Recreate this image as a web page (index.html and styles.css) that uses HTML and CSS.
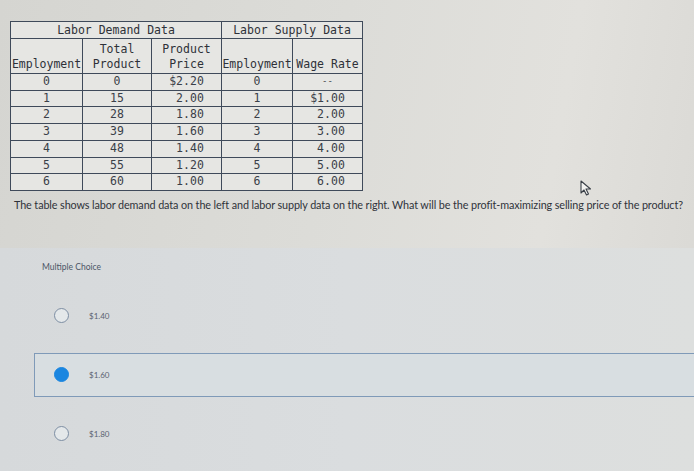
FILE: index.html
```html
<!DOCTYPE html>
<html>
<head>
<meta charset="utf-8">
<link rel="stylesheet" href="styles.css">
</head>
<body>
<div class="page">
  <div class="table-wrap">
    <table class="data">
      <tr class="title-row">
        <th colspan="3">Labor Demand Data</th>
        <th colspan="2">Labor Supply Data</th>
      </tr>
      <tr class="head-row">
        <th class="c1">Employment</th>
        <th class="c2">Total<br>Product</th>
        <th class="c3">Product<br>Price</th>
        <th class="c4">Employment</th>
        <th class="c5">Wage Rate</th>
      </tr>
      <tr><td>0</td><td>0</td><td>$2.20</td><td>0</td><td class="dash">--</td></tr>
      <tr><td>1</td><td>15</td><td>&nbsp;2.00</td><td>1</td><td>$1.00</td></tr>
      <tr><td>2</td><td>28</td><td>&nbsp;1.80</td><td>2</td><td>&nbsp;2.00</td></tr>
      <tr><td>3</td><td>39</td><td>&nbsp;1.60</td><td>3</td><td>&nbsp;3.00</td></tr>
      <tr><td>4</td><td>48</td><td>&nbsp;1.40</td><td>4</td><td>&nbsp;4.00</td></tr>
      <tr><td>5</td><td>55</td><td>&nbsp;1.20</td><td>5</td><td>&nbsp;5.00</td></tr>
      <tr><td>6</td><td>60</td><td>&nbsp;1.00</td><td>6</td><td>&nbsp;6.00</td></tr>
    </table>
  </div>
  <p class="question">The table shows labor demand data on the left and labor supply data on the right. What will be the profit-maximizing selling price of the product?</p>
  <div class="panel">
    <div class="mc-label">Multiple Choice</div>
    <div class="options">
      <div class="option"><span class="radio"></span><span class="opt-text">$1.40</span></div>
      <div class="option selected"><span class="radio"></span><span class="opt-text">$1.60</span></div>
      <div class="option"><span class="radio"></span><span class="opt-text">$1.80</span></div>
    </div>
  </div>
  <svg class="cursor" width="12" height="16" viewBox="0 0 12 16">
    <path d="M1 1 L1 13 L4 10 L6.5 15 L8.5 14 L6 9 L10.5 9 Z" fill="#f2f2f0" stroke="#3a4048" stroke-width="1.1" stroke-linejoin="round"/>
  </svg>
</div>
</body>
</html>
```

FILE: styles.css
```css
html, body {
  margin: 0;
  padding: 0;
}
body {
  width: 694px;
  height: 471px;
  overflow: hidden;
  background: linear-gradient(100deg, #d5d5d1 0%, #dcdcd8 45%, #e2e1dd 75%, #d9d8d4 100%);
  font-family: "Lato", "Open Sans", sans-serif;
}
.page {
  position: relative;
  height: 471px;
}
.table-wrap {
  padding: 21px 0 0 10px;
}
.data {
  border-collapse: collapse;
  font-family: "DejaVu Sans Mono", monospace;
  font-size: 11.5px;
  color: #2e3138;
  background: #e6e6e3;
  border: 1.5px solid #3b4556;
}
.data th, .data td {
  border: 1.2px solid #3f4a5a;
  padding: 0;
  font-weight: normal;
  text-align: center;
  white-space: pre;
}
.title-row th {
  height: 16px;
  line-height: 16px;
}
.head-row th {
  vertical-align: bottom;
  line-height: 15px;
  height: 33px;
  padding-bottom: 1px;
}
.data td {
  height: 15.7px;
  line-height: 15.7px;
  color: #3a3f48;
}
.c1 { width: 71px; }
.c2 { width: 68px; }
.c3 { width: 69px; }
.c4 { width: 70px; }
.c5 { width: 69px; }
.dash { color: #8a8f98; font-size: 9px; }
.question {
  margin: 7px 0 0 14px;
  font-size: 10.8px;
  color: #2f333a;
  white-space: nowrap;
  letter-spacing: -0.1px;
}
.panel {
  margin-top: 37px;
  background: linear-gradient(90deg, #d6d9db 0%, #dadddf 50%, #dddfde 100%);
  height: 225px;
  padding: 14px 0 0 0;
}
.mc-label {
  margin-left: 42px;
  font-size: 8.5px;
  color: #4c5566;
}
.options {
  margin-top: 22px;
  display: flex;
  flex-direction: column;
  gap: 15px;
  padding-left: 34px;
}
.option {
  display: flex;
  align-items: center;
  height: 42px;
  border: 1px solid transparent;
  border-right: none;
  padding-left: 19px;
}
.option.selected {
  border-color: #7f9ab8;
  background: #d8dee1;
}
.radio {
  width: 13px;
  height: 13px;
  border-radius: 50%;
  border: 1.5px solid #7d8ea3;
  background: #e4e8ea;
  flex: none;
}
.selected .radio {
  border-color: #1a86e0;
  background: #1a86e0;
}
.opt-text {
  margin-left: 20px;
  font-size: 8px;
  color: #5a6270;
}
.cursor {
  position: absolute;
  left: 580px;
  top: 180px;
}
```
